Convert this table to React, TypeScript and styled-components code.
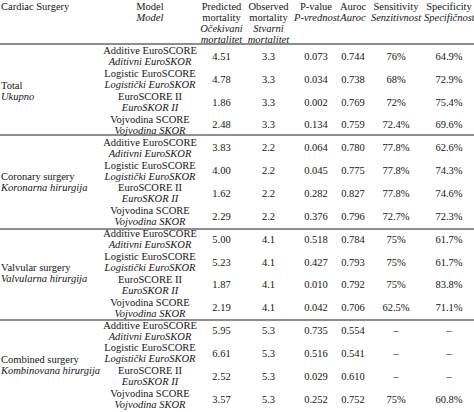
import React from 'react';
import styled, { createGlobalStyle, css } from 'styled-components';

const GlobalStyle = createGlobalStyle`
  html, body {
    margin: 0;
    padding: 0;
    background: #fff;
    overflow: hidden;
  }
`;

const RULE = '#8e8e8e';

// Column widths, left to right
const COLUMNS = [100, 100, 43, 51, 44, 30, 56, 50];

type Rule = 'none' | 'top' | 'bottom';

type Row = {
  model: string;
  modelSr: string;
  values: string[];
};

type Group = {
  name: string;
  nameSr: string;
  rule: Rule;
  rows: Row[];
};

const MODELS = [
  ['Additive EuroSCORE', 'Aditivni EuroSKOR'],
  ['Logistic EuroSCORE', 'Logistički EuroSKOR'],
  ['EuroSCORE II', 'EuroSKOR II'],
  ['Vojvodina SCORE', 'Vojvodina SKOR'],
];

const makeRows = (values: string[][]): Row[] =>
  values.map((v, i) => ({ model: MODELS[i][0], modelSr: MODELS[i][1], values: v }));

const GROUPS: Group[] = [
  {
    name: 'Total',
    nameSr: 'Ukupno',
    rule: 'bottom',
    rows: makeRows([
      ['4.51', '3.3', '0.073', '0.744', '76%', '64.9%'],
      ['4.78', '3.3', '0.034', '0.738', '68%', '72.9%'],
      ['1.86', '3.3', '0.002', '0.769', '72%', '75.4%'],
      ['2.48', '3.3', '0.134', '0.759', '72.4%', '69.6%'],
    ]),
  },
  {
    name: 'Coronary surgery',
    nameSr: 'Koronarna hirurgija',
    rule: 'none',
    rows: makeRows([
      ['3.83', '2.2', '0.064', '0.780', '77.8%', '62.6%'],
      ['4.00', '2.2', '0.045', '0.775', '77.8%', '74.3%'],
      ['1.62', '2.2', '0.282', '0.827', '77.8%', '74.6%'],
      ['2.29', '2.2', '0.376', '0.796', '72.7%', '72.3%'],
    ]),
  },
  {
    name: 'Valvular surgery',
    nameSr: 'Valvularna hirurgija',
    rule: 'top',
    rows: makeRows([
      ['5.00', '4.1', '0.518', '0.784', '75%', '61.7%'],
      ['5.23', '4.1', '0.427', '0.793', '75%', '61.7%'],
      ['1.87', '4.1', '0.010', '0.792', '75%', '83.8%'],
      ['2.19', '4.1', '0.042', '0.706', '62.5%', '71.1%'],
    ]),
  },
  {
    name: 'Combined surgery',
    nameSr: 'Kombinovana hirurgija',
    rule: 'top',
    rows: makeRows([
      ['5.95', '5.3', '0.735', '0.554', '–', '–'],
      ['6.61', '5.3', '0.516', '0.541', '–', '–'],
      ['2.52', '5.3', '0.029', '0.610', '–', '–'],
      ['3.57', '5.3', '0.252', '0.752', '75%', '60.8%'],
    ]),
  },
];

const HEADERS: [string[], string[]][] = [
  [['Model'], ['Model']],
  [['Predicted', 'mortality'], ['Očekivani', 'mortalitet']],
  [['Observed', 'mortality'], ['Stvarni', 'mortalitet']],
  [['P-value'], ['P-vrednost']],
  [['Auroc'], ['Auroc']],
  [['Sensitivity'], ['Senzitivnost']],
  [['Specificity'], ['Specifičnost']],
];

// Styled components
const Table = styled.table`
  border-collapse: separate;
  border-spacing: 0;
  table-layout: fixed;
  width: 474px;
  font-family: 'Liberation Serif', 'Times New Roman', serif;
  font-size: 10.5px;
  line-height: 11px;
  color: #151515;
`;

const HeadRow = styled.tr`
  height: 45px;
`;

const HeadCell = styled.th<{ $left?: boolean }>`
  padding: 0.5px 0 0 ${props => (props.$left ? '1px' : '0')};
  font-weight: normal;
  vertical-align: top;
  white-space: nowrap;
  text-align: ${props => (props.$left ? 'left' : 'center')};
  box-shadow: inset 0 -2px 0 ${RULE};
`;

const Line = styled.div<{ $italic?: boolean }>`
  font-style: ${props => (props.$italic ? 'italic' : 'normal')};
`;

// A group draws its separating rule either above its first row or below its last
const GroupBody = styled.tbody<{ $rule: Rule }>`
  ${props =>
    props.$rule === 'top' &&
    css`
      & > tr:first-child > td {
        box-shadow: inset 0 2px 0 ${RULE};
      }
    `}
  ${props =>
    props.$rule === 'bottom' &&
    css`
      & > tr:last-child > td,
      & > tr > td[rowspan] {
        box-shadow: inset 0 -2px 0 ${RULE};
      }
    `}
`;

const BodyRow = styled.tr`
  height: 22.85px;
`;

const GroupLabel = styled.td`
  padding: 0 0 0 1px;
  vertical-align: middle;
  text-align: left;
  white-space: nowrap;
`;

const ModelCell = styled.td`
  padding: 0;
  text-align: center;
  vertical-align: middle;
  white-space: nowrap;
`;

const ValueCell = styled.td`
  padding: 0;
  text-align: center;
  vertical-align: middle;
  white-space: nowrap;
`;

const App: React.FC = () => {
  return (
    <>
      <GlobalStyle />
      <Table>
        <colgroup>
          {COLUMNS.map((w, i) => (
            <col key={i} style={{ width: w }} />
          ))}
        </colgroup>
        <thead>
          <HeadRow>
            <HeadCell $left>Cardiac Surgery</HeadCell>
            {HEADERS.map(([en, sr], i) => (
              <HeadCell key={i}>
                {en.map(t => (
                  <Line key={t}>{t}</Line>
                ))}
                {sr.map(t => (
                  <Line key={t} $italic>
                    {t}
                  </Line>
                ))}
              </HeadCell>
            ))}
          </HeadRow>
        </thead>
        {GROUPS.map(group => (
          <GroupBody key={group.name} $rule={group.rule}>
            {group.rows.map((row, i) => (
              <BodyRow key={row.model}>
                {i === 0 && (
                  <GroupLabel rowSpan={group.rows.length}>
                    <Line>{group.name}</Line>
                    <Line $italic>{group.nameSr}</Line>
                  </GroupLabel>
                )}
                <ModelCell>
                  <Line>{row.model}</Line>
                  <Line $italic>{row.modelSr}</Line>
                </ModelCell>
                {row.values.map((v, j) => (
                  <ValueCell key={j}>{v}</ValueCell>
                ))}
              </BodyRow>
            ))}
          </GroupBody>
        ))}
      </Table>
    </>
  );
};

export default App;
